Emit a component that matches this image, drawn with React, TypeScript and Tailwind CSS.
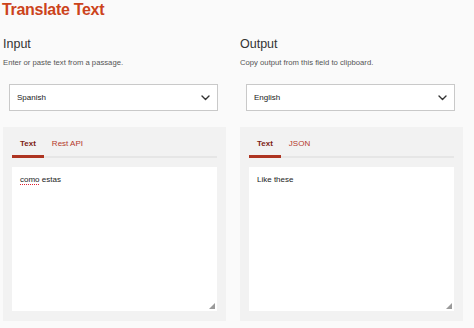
import React from "react";

function Chevron() {
  return (
    <svg width="9" height="6" viewBox="0 0 9 6" fill="none">
      <path d="M1 1 L4.5 4.5 L8 1" stroke="#333" strokeWidth="1.4" strokeLinecap="round" strokeLinejoin="round" />
    </svg>
  );
}

function Grip() {
  return (
    <svg className="absolute right-[2px] bottom-[2px]" width="6" height="6" viewBox="0 0 6 6">
      <path d="M6 0 L6 6 L0 6 Z" fill="#9a9a9a" />
    </svg>
  );
}

function Column({
  heading,
  desc,
  lang,
  tabs,
  children,
}: {
  heading: string;
  desc: string;
  lang: string;
  tabs: [string, string];
  children: React.ReactNode;
}) {
  return (
    <div className="w-[223px] flex flex-col">
      <div className="text-[12.5px] leading-[16px] text-[#333] pl-[0px]">{heading}</div>
      <div className="text-[7.7px] leading-[10px] text-[#555] mt-[6px]">{desc}</div>
      <div className="ml-[6px] w-[209px] h-[27px] mt-[16px] border border-[#c9c9c9] bg-white flex items-center justify-between pl-[7px] pr-[7px]">
        <span className="text-[8px] text-[#222]">{lang}</span>
        <Chevron />
      </div>
      <div className="mt-[16px] h-[194px] bg-[#f2f2f2] flex flex-col px-[9px] pb-[10px]">
        <div className="flex border-b-[2px] border-[#e6e6e6]">
          <div className="relative px-[8px] pt-[12px] pb-[7px] text-[8px] leading-[10px] font-bold text-[#7d1e12]">
            {tabs[0]}
            <span className="absolute left-0 right-0 bottom-[-2px] h-[3px] bg-[#ae3421]" />
          </div>
          <div className="px-[8px] pt-[12px] pb-[7px] text-[8px] leading-[10px] text-[#b5392a]">{tabs[1]}</div>
        </div>
        <div className="relative mt-[9px] flex-1 bg-white px-[8px] pt-[8px] text-[8px] leading-[10px] text-[#222]">
          {children}
          <Grip />
        </div>
      </div>
    </div>
  );
}

export default function App() {
  return (
    <div className="w-[474px] h-[328px] bg-[#fafafa] px-[3px] overflow-hidden" style={{ fontFamily: "'Liberation Sans', Arial, sans-serif" }}>
      <h1 className="text-[16px] leading-[20px] font-bold text-[#cc431b] -ml-[1px] tracking-[-0.3px]">Translate Text</h1>
      <div className="flex gap-[14px] mt-[16px]">
        <Column heading="Input" desc="Enter or paste text from a passage." lang="Spanish" tabs={["Text", "Rest API"]}>
          <span className="underline decoration-dotted decoration-[#d23] underline-offset-[2px]">como</span> estas
        </Column>
        <Column heading="Output" desc="Copy output from this field to clipboard." lang="English" tabs={["Text", "JSON"]}>
          Like these
        </Column>
      </div>
    </div>
  );
}
